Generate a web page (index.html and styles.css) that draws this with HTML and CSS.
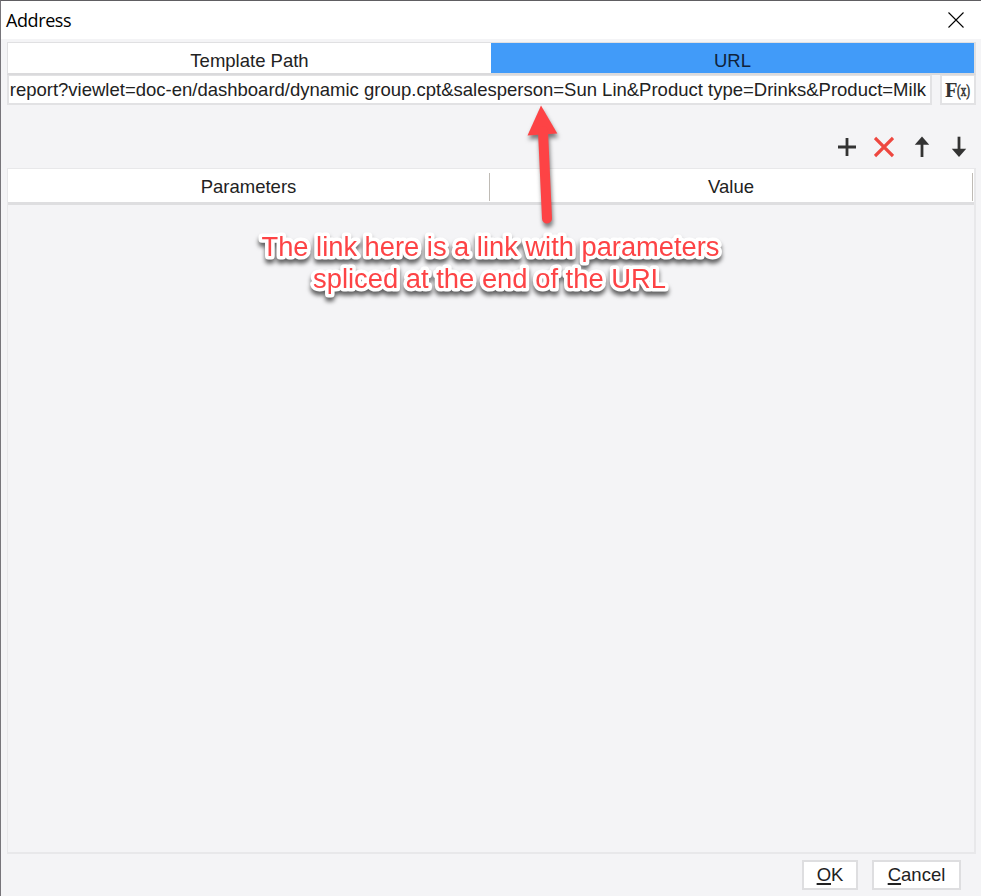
FILE: index.html
```html
<!DOCTYPE html>
<html lang="en">
<head>
<meta charset="utf-8">
<title>Address</title>
<link rel="stylesheet" href="styles.css">
</head>
<body>
<div class="dialog">
  <header class="titlebar">
    <span class="title">Address</span>
    <svg class="close" width="16" height="16" viewBox="0 0 16 16"><path d="M.5 .5l15 15M15.500 .5l-15 15"/></svg>
  </header>
  <div class="tabs">
    <div class="tab"><span class="t-template">Template Path</span></div>
    <div class="tab active"><span class="t-url">URL</span></div>
  </div>
  <div class="url-row">
    <div class="url-field"><span>report?viewlet=doc-en/dashboard/dynamic group.cpt&amp;salesperson=Sun Lin&amp;Product type=Drinks&amp;Product=Milk</span></div>
    <div class="formula">
      <svg width="28" height="24" viewBox="0 0 28 24">
        <text class="fx-f" x="1" y="19" textLength="12.500" lengthAdjust="spacingAndGlyphs">F</text>
        <text class="fx-x" x="13" y="18" textLength="13" lengthAdjust="spacingAndGlyphs">(x)</text>
      </svg>
    </div>
  </div>
  <div class="toolbar">
    <svg width="20" height="22" viewBox="0 0 20 22"><path class="dark" d="M1 11h18M10 2v18"/></svg>
    <svg width="20" height="22" viewBox="0 0 20 22"><path class="red" d="M1 2l18 18M19 2l-18 18"/></svg>
    <svg width="20" height="22" viewBox="0 0 20 22"><path class="dark" d="M10 7v14"/><path class="head" d="M10 .5L17.200 8.700H2.800z"/></svg>
    <svg width="20" height="22" viewBox="0 0 20 22"><path class="dark" d="M10 .7v14"/><path class="head" d="M10 21L17.200 12.800H2.800z"/></svg>
  </div>
  <div class="table">
    <div class="thead">
      <div class="th"><span class="t-param">Parameters</span></div>
      <div class="th"><span class="t-value">Value</span></div>
    </div>
  </div>
  <footer class="actions">
    <div class="btn ok"><span><u>O</u>K</span></div>
    <div class="btn cancel"><span><u>C</u>ancel</span></div>
  </footer>
  <svg class="note" width="500" height="210" viewBox="240 100 500 210">
    <g class="arrow">
      <path d="M541 105.500L557.300 133.500L527.500 135.500z"/>
      <path class="shaft" d="M543 131L547 218.500"/>
    </g>
    <g class="note-text">
      <text x="261.500" y="255.500" textLength="458" lengthAdjust="spacingAndGlyphs">The link here is a link with parameters</text>
      <text x="313" y="287.500" textLength="353" lengthAdjust="spacingAndGlyphs">spliced at the end of the URL</text>
    </g>
  </svg>
</div>
</body>
</html>
```

FILE: styles.css
```css
* { box-sizing: border-box; }
body {
  margin: 0;
  font-family: "Liberation Sans", Arial, sans-serif;
  font-size: 18px;
  color: #222;
}
.dialog {
  position: relative;
  width: 981px;
  height: 896px;
  display: flex;
  flex-direction: column;
  background: #f4f4f6;
  border-top: 1px solid #605e62;
  border-left: 1px solid #77757a;
  overflow: hidden;
}
.titlebar {
  flex: none;
  height: 38px;
  background: #fff;
  display: flex;
  justify-content: space-between;
  padding: 10px 17px 0 5px;
}
.title {
  font: 18px/18px "Open Sans", "Noto Sans", sans-serif;
  letter-spacing: -0.4px;
  color: #000;
}
.close { margin-top: 1px; }
.close path { stroke: #000; stroke-width: 1.1; fill: none; }
.tabs {
  flex: none;
  display: flex;
  height: 33px;
  margin: 3px 5px 0 6px;
  border: 1px solid #e0e0e2;
  border-right-width: 2px;
  border-bottom: 2px solid #dadadc;
  background: #fff;
}
.tab {
  flex: 1;
  display: flex;
  justify-content: center;
  font-size: 18.500px;
  line-height: 20px;
  padding-top: 8px;
}
.tab.active { background: #419bf9; color: #10233c; }
.url-row {
  flex: none;
  display: flex;
  justify-content: space-between;
  height: 30px;
  margin: 0 5px 0 6px;
}
.url-field, .formula { background: #fff; border: 2px solid #e2e2e4; border-top-width: 1px; }
.url-field {
  width: 925px;
  display: flex;
  justify-content: flex-end;
  padding-right: 4px;
  white-space: nowrap;
  font-size: 18.500px;
  line-height: 27px;
}
.formula {
  width: 36px;
  display: flex;
  justify-content: center;
  padding-top: 2px;
}
.formula svg { overflow: visible; }
.formula text { font-family: "Liberation Serif", serif; fill: #333; }
.fx-f { font-size: 22px; font-weight: bold; }
.fx-x { font-size: 17px; stroke: #333; stroke-width: .6; }
.toolbar {
  flex: none;
  display: flex;
  justify-content: flex-end;
  gap: 17.500px;
  height: 63px;
  padding: 31px 12px 0 0;
}
.dark { stroke: #333; stroke-width: 2.800; fill: none; }
.red { stroke: #ee473f; stroke-width: 3.200; fill: none; }
.head { fill: #333; }
.table {
  flex: none;
  height: 686px;
  margin: 0 5px 0 6px;
  border: 1px solid #e8e8ea;
  border-width: 1px 2px 2px 1px;
}
.thead {
  display: grid;
  grid-template-columns: 482px 1fr;
  height: 36px;
  background: #fff;
  border-bottom: 3px solid #dedee0;
  padding: 4px 1px 3px 0;
}
.th {
  display: flex;
  justify-content: center;
  font-size: 18.500px;
  line-height: 28px;
  border-right: 1px solid #bfbbb5;
}
.actions {
  display: flex;
  justify-content: flex-end;
  gap: 14px;
  padding: 6px 20px 0 0;
}
.btn {
  height: 30px;
  background: #fff;
  border: 2px solid #dedee0;
  display: flex;
  justify-content: center;
  font-size: 18.500px;
  line-height: 26px;
}
.ok { width: 56px; }
.cancel { width: 89px; }
.btn u { text-decoration-thickness: 1.500px; text-underline-offset: 2px; text-decoration-skip-ink: none; }
.note { position: absolute; left: 239px; top: 99px; }
.arrow { fill: #fd4345; filter: drop-shadow(1px 4px 2px rgba(0, 0, 0, .5)); }
.shaft { stroke: #fd4345; stroke-width: 10; stroke-linecap: round; }
.note-text { filter: drop-shadow(0 4px 2px rgba(0, 0, 0, .6)); }
.note-text text {
  font-size: 27px;
  fill: #fd4345;
  stroke: #fff;
  stroke-width: 7px;
  stroke-linejoin: round;
  paint-order: stroke;
}
```
